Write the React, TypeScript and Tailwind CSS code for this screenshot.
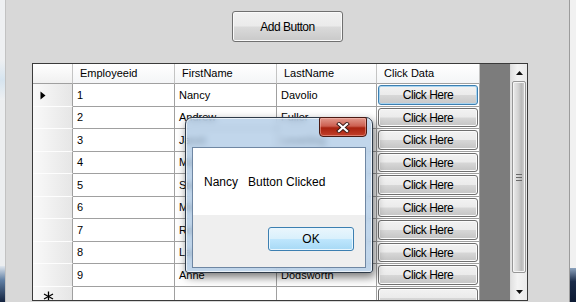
import React from "react";

const rows: [string, string, string][] = [
  ["1", "Nancy", "Davolio"],
  ["2", "Andrew", "Fuller"],
  ["3", "Janet", "Leverling"],
  ["4", "Margaret", "Peacock"],
  ["5", "Steven", "Buchanan"],
  ["6", "Michael", "Suyama"],
  ["7", "Robert", "King"],
  ["8", "Laura", "Callahan"],
  ["9", "Anne", "Dodsworth"],
];
const heights = ["h-[23px]", "h-[22px]", "h-[23px]", "h-[22px]", "h-[23px]", "h-[22px]", "h-[23px]", "h-[22px]", "h-[23px]"];

function GridButton({ label, focused }: { label?: string; focused?: boolean }) {
  return (
    <div className="w-[103px] shrink-0 border-r border-b border-[#a0a0a0] bg-white p-[1px] flex">
      <div
        className={
          "flex-1 rounded-[3px] border flex items-center justify-center text-[12px] tracking-[-0.5px] text-black " +
          (focused
            ? "border-[#3c7fb1] shadow-[inset_0_0_0_1px_#a9d4f0] bg-[linear-gradient(#f2f2f2_0%,#ebebeb_48%,#d7d7d7_52%,#c9c9c9_100%)]"
            : "border-[#6f6f6f] shadow-[inset_0_0_0_1px_#fbfbfb] bg-[linear-gradient(#f2f2f2_0%,#ebebeb_48%,#d7d7d7_52%,#c4c4c4_100%)]")
        }
      >
        {label}
      </div>
    </div>
  );
}

function RowHeader({ children, top }: { children?: React.ReactNode; top?: boolean }) {
  return (
    <div
      className={
        "w-[40px] shrink-0 border-r border-b border-r-[#a0a0a0] border-b-[#fdfdfd] bg-[linear-gradient(90deg,#f9f9f9,#e6e6e6)] flex pl-[7px] " +
        (top ? "items-start" : "items-center")
      }
    >
      {children}
    </div>
  );
}

function Cell({ w, children }: { w: string; children?: React.ReactNode }) {
  return (
    <div className={w + " shrink-0 border-r border-b border-[#a0a0a0] bg-white flex items-center pl-[4px] overflow-hidden whitespace-nowrap text-[11px]"}>
      {children}
    </div>
  );
}

function HeadCell({ w, children }: { w: string; children?: React.ReactNode }) {
  return (
    <div className={w + " shrink-0 border-r border-b border-r-[#c4c4c4] border-b-[#a0a0a0] bg-[linear-gradient(#ffffff,#f4f5f7)] flex items-center pl-[7px] whitespace-nowrap text-[11px]"}>
      {children}
    </div>
  );
}

export default function App() {
  return (
    <div className="w-[576px] h-[302px] overflow-hidden flex bg-[#d8d8d8] relative font-['Liberation_Sans',Arial,sans-serif] text-black">
      {/* left window frame */}
      <div className="w-[6px] shrink-0 flex flex-col border-r border-[#c2c2c2]">
        <div className="h-[60px] bg-[#eef0f2]" />
        <div className="h-[40px] bg-[linear-gradient(#eef0f2,#d6e4ef,#eef0f2)]" />
        <div className="flex-1 bg-[#eceef0]" />
        <div className="h-[36px] bg-[linear-gradient(#dfe6ee,#5f7ea3_40%,#13233f)]" />
      </div>

      {/* form body */}
      <div className="flex-1 flex flex-col pl-[26px]">
        <div className="h-[63px] flex items-start justify-center pt-[11px] -ml-[26px]">
          <div className="w-[111px] h-[31px] rounded-[3px] border border-[#707070] shadow-[inset_0_0_0_1px_#fafafa] bg-[linear-gradient(#f2f2f2_0%,#ebebeb_48%,#dadada_52%,#c9c9c9_100%)] flex items-center justify-center text-[12px] tracking-[-0.5px]">
            Add Button
          </div>
        </div>

        <div className="w-[496px] h-[238px] border border-[#3a3a3a] flex overflow-hidden">
          <div className="flex-1 bg-[#7c7c7c] flex flex-col overflow-hidden">
            <div className="flex h-[20px] shrink-0">
              <div className="w-[40px] shrink-0 border-r border-b border-r-[#c4c4c4] border-b-[#a0a0a0] bg-[linear-gradient(#ffffff,#f0f0f0)]" />
              <HeadCell w="w-[102px]">Employeeid</HeadCell>
              <HeadCell w="w-[102px]">FirstName</HeadCell>
              <HeadCell w="w-[100px]">LastName</HeadCell>
              <HeadCell w="w-[103px]">Click Data</HeadCell>
            </div>
            {rows.map((r, i) => (
              <div key={i} className={"flex shrink-0 " + heights[i]}>
                <RowHeader>
                  {i === 0 && (
                    <svg width="6" height="9" viewBox="0 0 6 9">
                      <path d="M0.5 0.5 L5.5 4.5 L0.5 8.5 Z" fill="#000" />
                    </svg>
                  )}
                </RowHeader>
                <Cell w="w-[102px]">{r[0]}</Cell>
                <Cell w="w-[102px]">{r[1]}</Cell>
                <Cell w="w-[100px]">{r[2]}</Cell>
                <GridButton label="Click Here" focused={i === 0} />
              </div>
            ))}
            <div className="flex shrink-0 h-[23px]">
              <RowHeader top>
                <svg width="11" height="11" viewBox="0 0 11 11" className="ml-[3px] mt-[4px]">
                  <g stroke="#000" strokeWidth="1.3">
                    <line x1="5.5" y1="0.5" x2="5.5" y2="10.5" />
                    <line x1="1" y1="3" x2="10" y2="8" />
                    <line x1="1" y1="8" x2="10" y2="3" />
                  </g>
                </svg>
              </RowHeader>
              <Cell w="w-[102px]" />
              <Cell w="w-[102px]" />
              <Cell w="w-[100px]" />
              <GridButton />
            </div>
          </div>

          {/* scrollbar */}
          <div className="w-[17px] shrink-0 flex flex-col bg-[linear-gradient(90deg,#e2e2e2,#f3f3f3_40%,#eaeaea)] border-l border-[#dcdcdc]">
            <div className="h-[17px] flex items-center justify-center">
              <svg width="7" height="4" viewBox="0 0 7 4">
                <path d="M0 4 L3.5 0 L7 4 Z" fill="#111" />
              </svg>
            </div>
            <div className="h-[192px] mx-[1px] rounded-[2px] border border-[#979797] shadow-[inset_0_0_0_1px_#f5f5f5] bg-[linear-gradient(90deg,#ececec,#d2d2d2_45%,#b9b9b9_70%,#d5d5d5)] flex flex-col items-center justify-center gap-[2px]">
              <div className="w-[6px] h-px bg-[#6a6a6a]" />
              <div className="w-[6px] h-px bg-[#6a6a6a]" />
              <div className="w-[6px] h-px bg-[#6a6a6a]" />
            </div>
            <div className="flex-1" />
            <div className="h-[17px] flex items-center justify-center">
              <svg width="7" height="4" viewBox="0 0 7 4">
                <path d="M0 0 L3.5 4 L7 0 Z" fill="#111" />
              </svg>
            </div>
          </div>
        </div>
      </div>

      {/* right frame */}
      <div className="w-px shrink-0 bg-[#9c9c9c]" />
      <div className="w-[6px] shrink-0 flex flex-col">
        <div className="flex-1 bg-[#f1f1f1]" />
        <div className="h-[34px] bg-[linear-gradient(#8da3be,#1a2b49_40%,#0d1a33)]" />
      </div>

      {/* message box */}
      <div className="absolute left-[185px] top-[117px] w-[188px] h-[156px] rounded-t-[7px] rounded-b-[3px] border border-[#2e3a48] bg-[#a7c5e3]/70 backdrop-blur-[3px] shadow-[inset_0_0_0_1px_rgba(255,255,255,0.65),2px_4px_10px_rgba(0,0,0,0.55)] flex flex-col px-[6px] pb-[4px]">
        <div className="h-[29px] shrink-0 relative">
          <div className="absolute right-[-1px] top-[-1px] w-[48px] h-[20px] rounded-b-[4px] rounded-t-[2px] border border-[#4a1912] shadow-[inset_0_0_0_1px_rgba(255,200,190,0.45)] bg-[linear-gradient(#e29a8d_0%,#cc5f50_45%,#a8220f_55%,#c2402b_100%)] flex items-center justify-center">
            <svg width="14" height="11" viewBox="0 0 14 11">
              <g strokeLinecap="square">
                <path d="M3 2 L11 9 M11 2 L3 9" stroke="#3a1a16" strokeWidth="4" />
                <path d="M3 2 L11 9 M11 2 L3 9" stroke="#ffffff" strokeWidth="2.2" />
              </g>
            </svg>
          </div>
        </div>
        <div className="flex-1 border border-[#6f87a3] bg-white flex flex-col">
          <div className="flex-1 flex items-center pl-[11px] text-[12px] whitespace-pre">Nancy   Button Clicked</div>
          <div className="h-[52px] shrink-0 bg-[#efefef] flex justify-end items-start pt-[12px] pr-[11px]">
            <div className="w-[86px] h-[24px] rounded-[3px] border border-[#3c7fb1] shadow-[inset_0_0_0_1px_#e8f6fe] bg-[linear-gradient(#eaf6fd_0%,#d9f0fc_48%,#bee6fd_52%,#a7d9f5_100%)] flex items-center justify-center text-[12px]">
              OK
            </div>
          </div>
        </div>
      </div>
    </div>
  );
}
